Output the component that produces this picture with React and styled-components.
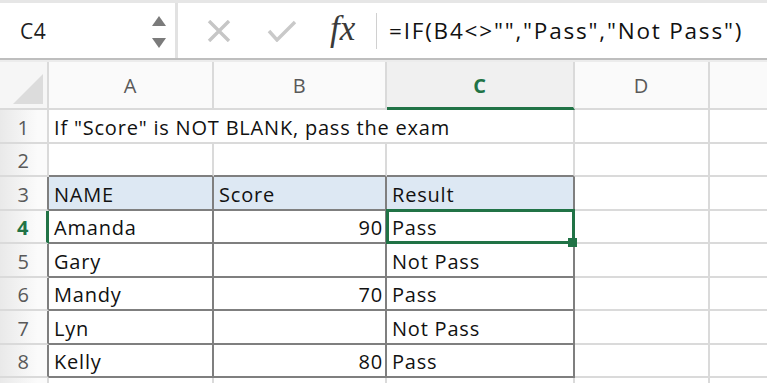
import React from "react";
import styled, { createGlobalStyle } from "styled-components";

const GRID = "#dadada";
const DARK = "#7f7f7f";
const GREEN = "#217346";

const GlobalStyle = createGlobalStyle`
  body {
    margin: 0;
    background: #fff;
    font-family: "Open Sans", Lato, sans-serif;
  }
`;

const Window = styled.div`
  width: 767px;
  height: 383px;
  overflow: hidden;
  background: #fff;
`;

const Toolbar = styled.div`
  display: flex;
  gap: 3px;
  height: 55px;
  background: #e2e2e2;
  border-top: 3px solid #e6e6e6;
  border-bottom: 2px solid #bebebe;
  box-shadow: 0 2px 0 #ececec;
  margin-bottom: 2px;
`;

const NameBox = styled.div`
  width: 175px;
  background: #fff;
  display: flex;
  align-items: center;
  justify-content: space-between;
  padding: 0 9px 0 20px;
  box-sizing: border-box;
  font-size: 21px;
  letter-spacing: 0.6px;
  color: #1e1e1e;
`;

const Stepper = styled.div`
  display: flex;
  flex-direction: column;
  gap: 12px;
  margin-top: 2px;
`;

const Arrow = styled.div`
  width: 0;
  height: 0;
  border-left: 7.5px solid transparent;
  border-right: 7.5px solid transparent;
  ${({ $down }) =>
    $down
      ? "border-top: 10px solid #7b7b7b;"
      : "border-bottom: 10px solid #7b7b7b;"}
`;

const FormulaBar = styled.div`
  flex: 1;
  background: #fff;
  display: flex;
  align-items: center;
  padding-left: 29px;
`;

const IconSlot = styled.div`
  display: flex;
  align-items: center;
  width: ${({ $w }) => $w}px;
`;

const Fx = styled.div`
  font-family: "Liberation Serif", serif;
  font-style: italic;
  font-size: 35px;
  color: #3a3a3a;
  width: 46px;
  padding-left: 2px;
  margin-top: -4px;
`;

const Divider = styled.div`
  width: 1px;
  height: 36px;
  background: #d0d0d0;
  margin-right: 12px;
`;

const Formula = styled.div`
  font-size: 22.5px;
  letter-spacing: 1.8px;
  color: #111;
  white-space: nowrap;
`;

const Sheet = styled.div`
  display: grid;
  grid-template-columns: 49px 165px 173px 188px 135px 135px;
  grid-template-rows: 48px repeat(9, 33.5px);
  font-size: 20px;
  letter-spacing: 0.8px;
`;

const Corner = styled.div`
  position: relative;
  background: #f6f6f6;
  border-right: 2px solid ${GRID};
  border-bottom: 2px solid ${GRID};
  box-sizing: border-box;

  &::after {
    content: "";
    position: absolute;
    right: 4px;
    bottom: 4px;
    width: 30px;
    height: 30px;
    background: #dcdcdc;
    clip-path: polygon(100% 0, 100% 100%, 0 100%);
  }
`;

const ColHead = styled.div`
  box-sizing: border-box;
  display: flex;
  align-items: center;
  justify-content: center;
  background: ${({ $active }) => ($active ? "#f0f0f0" : "#fafafa")};
  border-right: 2px solid ${GRID};
  border-bottom: ${({ $active }) =>
    $active ? `3px solid ${GREEN}` : `2px solid ${GRID}`};
  color: ${({ $active }) => ($active ? GREEN : "#595959")};
  font-weight: ${({ $active }) => ($active ? 700 : 400)};
  padding-top: ${({ $active }) => ($active ? "1px" : "0")};
`;

const RowHead = styled.div`
  box-sizing: border-box;
  display: flex;
  align-items: center;
  justify-content: center;
  padding-top: 3px;
  background: linear-gradient(to right, #e9e9e9, #fbfbfb 80%);
  border-bottom: 2px solid ${GRID};
  border-right: ${({ $active, $table }) =>
    $active
      ? `3px solid ${GREEN}`
      : `2px solid ${$table ? DARK : GRID}`};
  color: ${({ $active }) => ($active ? GREEN : "#595959")};
  font-weight: ${({ $active }) => ($active ? 700 : 400)};
`;

const Cell = styled.div`
  position: relative;
  box-sizing: border-box;
  display: flex;
  align-items: center;
  justify-content: ${({ $num }) => ($num ? "flex-end" : "flex-start")};
  padding: 3px ${({ $num }) => ($num ? "2px" : "0")} 0
    ${({ $num }) => ($num ? "0" : "5px")};
  grid-column: ${({ $span }) => ($span ? `span ${$span}` : "auto")};
  white-space: nowrap;
  color: #111;
  background: ${({ $head }) => ($head ? "#dde8f3" : "#fff")};
  border-right: 2px solid ${({ $table }) => ($table ? DARK : GRID)};
  border-bottom: 2px solid
    ${({ $table, $above }) => ($table || $above ? DARK : GRID)};

  ${({ $selected }) =>
    $selected &&
    `
    &::after {
      content: "";
      position: absolute;
      top: -2px;
      left: -1px;
      right: -2px;
      bottom: -2px;
      border: 3px solid ${GREEN};
    }
    &::before {
      content: "";
      position: absolute;
      right: -4px;
      bottom: -5px;
      width: 9px;
      height: 9px;
      background: ${GREEN};
      z-index: 1;
    }
  `}
`;

// column E sits past the right edge, so its letter is out of view
const columns = ["A", "B", "C", "D", ""];

const rows = [
  { n: 1, title: 'If "Score" is NOT BLANK, pass the exam' },
  { n: 2, above: true },
  { n: 3, head: true, cells: ["NAME", "Score", "Result"] },
  { n: 4, cells: ["Amanda", "90", "Pass"], active: true },
  { n: 5, cells: ["Gary", "", "Not Pass"] },
  { n: 6, cells: ["Mandy", "70", "Pass"] },
  { n: 7, cells: ["Lyn", "", "Not Pass"] },
  { n: 8, cells: ["Kelly", "80", "Pass"] },
  { n: 9, hidden: true },
];

const CancelIcon = () => (
  <svg width="24" height="22" viewBox="0 0 24 22">
    <path d="M2 1 L22 21 M22 1 L2 21" stroke="#c6c6c6" strokeWidth="3.4" fill="none" />
  </svg>
);

const CheckIcon = () => (
  <svg width="30" height="22" viewBox="0 0 30 22">
    <path d="M2 11 L10 20 L28 2" stroke="#c9c9c9" strokeWidth="3.4" fill="none" />
  </svg>
);

const renderRow = (row) => {
  const table = !!row.cells;
  const out = [
    <RowHead key={`h${row.n}`} $table={table} $active={row.active}>
      {row.hidden ? null : row.n}
    </RowHead>,
  ];

  if (row.title) {
    out.push(
      <Cell key={`t${row.n}`} $span={3}>
        {row.title}
      </Cell>
    );
  } else {
    [0, 1, 2].forEach((i) => {
      const value = row.cells ? row.cells[i] : "";
      out.push(
        <Cell
          key={`${row.n}-${i}`}
          $table={table}
          $above={row.above}
          $head={row.head}
          $num={i === 1 && !row.head}
          $selected={row.active && i === 2}
        >
          {value}
        </Cell>
      );
    });
  }

  out.push(<Cell key={`${row.n}-d`} />, <Cell key={`${row.n}-e`} />);
  return out;
};

const App = () => (
  <Window>
    <GlobalStyle />
    <Toolbar>
      <NameBox>
        C4
        <Stepper>
          <Arrow />
          <Arrow $down />
        </Stepper>
      </NameBox>
      <FormulaBar>
        <IconSlot $w={60}>
          <CancelIcon />
        </IconSlot>
        <IconSlot $w={61}>
          <CheckIcon />
        </IconSlot>
        <Fx>fx</Fx>
        <Divider />
        <Formula>=IF(B4&lt;&gt;"","Pass","Not Pass")</Formula>
      </FormulaBar>
    </Toolbar>

    <Sheet>
      <Corner />
      {columns.map((c, i) => (
        <ColHead key={i} $active={c === "C"}>
          {c}
        </ColHead>
      ))}
      {rows.map(renderRow)}
    </Sheet>
  </Window>
);

export default App;
